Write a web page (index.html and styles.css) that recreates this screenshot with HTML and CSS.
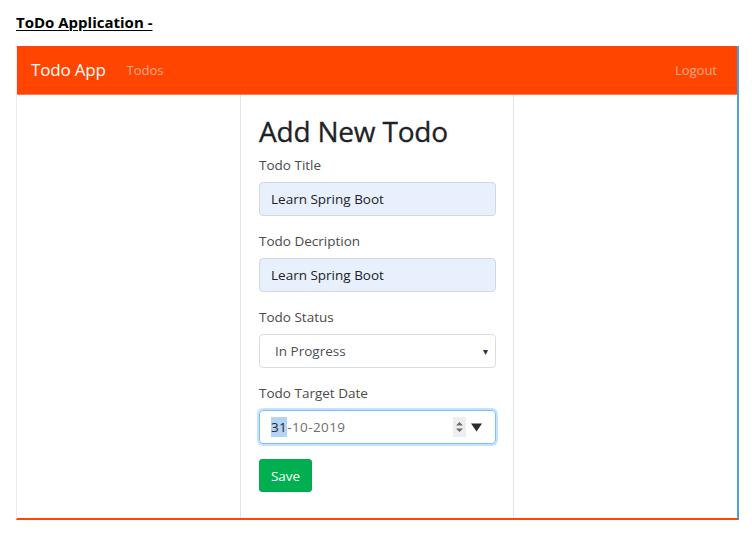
FILE: index.html
```html
<!DOCTYPE html>
<html lang="en">
<head>
<meta charset="utf-8">
<title>ToDo Application</title>
<link rel="stylesheet" href="styles.css">
</head>
<body>
<h1 class="doc-title"><span class="doc-title-text">ToDo Application -</span></h1>
<div class="frame">
  <nav class="navbar">
    <div class="nav-left">
      <span class="brand">Todo App</span>
      <span class="nav-link">Todos</span>
    </div>
    <span class="nav-link">Logout</span>
  </nav>
  <main class="content">
    <section class="card">
      <h2 class="card-title">Add New Todo</h2>
      <div class="group">
        <label class="label">Todo Title</label>
        <input class="control autofill" type="text" value="Learn Spring Boot">
      </div>
      <div class="group">
        <label class="label">Todo Decription</label>
        <input class="control autofill" type="text" value="Learn Spring Boot">
      </div>
      <div class="group">
        <label class="label">Todo Status</label>
        <div class="control select">
          <span class="select-text">In Progress</span>
          <span class="select-arrow">&#9662;</span>
        </div>
      </div>
      <div class="group">
        <label class="label">Todo Target Date</label>
        <div class="control date">
          <span class="date-text"><span class="date-sel">31</span>-10-2019</span>
          <span class="date-tools">
            <span class="spinner">
              <svg width="9" height="14" viewBox="0 0 9 14"><path d="M1 5.5 L4.5 2 L8 5.5 Z M1 8.5 L4.5 12 L8 8.5 Z" fill="#6b6b6b"/></svg>
            </span>
            <svg class="drop" width="11" height="9" viewBox="0 0 11 9"><path d="M0 0.5 H11 L5.5 8.5 Z" fill="#2b2b2b"/></svg>
          </span>
        </div>
      </div>
      <button class="btn-save" type="button">Save</button>
    </section>
  </main>
</div>
</body>
</html>
```
FILE: styles.css
```css
html, body {
  margin: 0;
  padding: 0;
  background: #ffffff;
}
body {
  font-family: "Open Sans", "Noto Sans", "Liberation Sans", sans-serif;
  color: #212529;
}
.doc-title {
  margin: 0;
  padding: 11px 0 0 16px;
  height: 46px;
  box-sizing: border-box;
  font-family: "Open Sans", "Liberation Sans", sans-serif;
  font-size: 15px;
  font-weight: 700;
  line-height: 22px;
  color: #000;
}
.doc-title-text {
  text-decoration: underline;
  text-underline-offset: 2px;
  text-decoration-thickness: 1px;
}
.frame {
  margin-left: 16px;
  width: 723px;
  box-sizing: border-box;
  border-left: 1px solid #e6eef8;
  border-right: 2px solid #4d9de0;
  border-bottom: 2px solid #ff4500;
}
.navbar {
  height: 49px;
  background: #ff4500;
  display: flex;
  align-items: center;
  justify-content: space-between;
  padding: 0 20px 0 14px;
  box-sizing: border-box;
  border-bottom: 1px solid #ff7a52;
}
.nav-left {
  display: flex;
  align-items: center;
  gap: 21px;
}
.brand {
  color: #ffffff;
  font-size: 17px;
  line-height: 24px;
  letter-spacing: -0.2px;
}
.nav-link {
  color: rgba(255, 255, 255, 0.55);
  font-size: 13px;
  line-height: 20px;
}
.content {
  height: 423px;
  display: flex;
  justify-content: center;
}
.card {
  width: 274px;
  box-sizing: border-box;
  border: 1px solid #e3e3e3;
  border-top: none;
  border-bottom: none;
  padding: 18px 18px 0 18px;
  display: flex;
  flex-direction: column;
}
.card-title {
  margin: 0 0 6px 0;
  font-size: 28px;
  line-height: 36px;
  font-weight: 500;
  color: #1e2226;
  letter-spacing: -0.2px;
  -webkit-text-stroke: 0.3px #1e2226;
}
.group {
  display: flex;
  flex-direction: column;
  margin-bottom: 15px;
}
.label {
  font-size: 13.5px;
  line-height: 21px;
  margin-bottom: 6px;
  color: #4a4a4a;
}
.control {
  height: 34px;
  width: 237px;
  box-sizing: border-box;
  border: 1px solid #ced4da;
  border-radius: 4px;
  font-family: inherit;
  font-size: 13.5px;
  padding: 0 11px;
  margin: 0;
  outline: none;
}
.autofill {
  background: #e8f0fe;
  color: #222;
  border-color: #cfd8e3;
}
.select {
  display: flex;
  align-items: center;
  justify-content: space-between;
  padding: 0 7px 0 15px;
  color: #495057;
  border-color: #dadde0;
}
.select-arrow {
  font-size: 10px;
  color: #333;
}
.date {
  display: flex;
  align-items: center;
  justify-content: space-between;
  border-color: #80bdff;
  box-shadow: 0 0 0 2px rgba(0, 123, 255, 0.22);
  color: #6a6f74;
  padding: 0 13px 0 11px;
  letter-spacing: 0.4px;
}
.date-sel {
  background: #b3d4f5;
  color: #2a2a2a;
  padding: 1px 0;
}
.date-tools {
  display: flex;
  align-items: center;
  gap: 5px;
}
.spinner {
  width: 13px;
  height: 20px;
  background: #eeeeee;
  display: flex;
  align-items: center;
  justify-content: center;
}
.btn-save {
  align-self: flex-start;
  width: 53px;
  height: 33px;
  border: 1px solid #00a94c;
  border-radius: 3px;
  background: #00b050;
  color: #ffffff;
  font-family: inherit;
  font-size: 13.5px;
  padding: 0;
}
```
